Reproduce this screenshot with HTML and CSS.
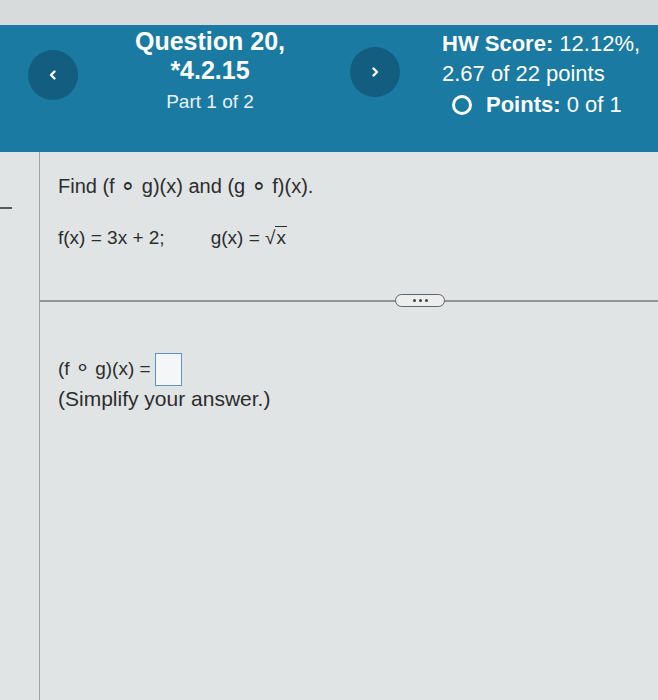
FILE: index.html
```html
<!DOCTYPE html>
<html>
<head>
<meta charset="utf-8">
<link rel="stylesheet" href="styles.css">
</head>
<body>
<div class="topstrip"></div>
<header class="header">
  <button class="nav nav-prev" aria-label="Previous">
    <svg width="14" height="14" viewBox="0 0 14 14"><path d="M8.5 3.5 L5 7 L8.5 10.5" fill="none" stroke="#fff" stroke-width="2.4" stroke-linecap="round" stroke-linejoin="round"/></svg>
  </button>
  <div class="title">
    <div class="title-main">Question 20,</div>
    <div class="title-main">*4.2.15</div>
    <div class="title-part">Part 1 of 2</div>
  </div>
  <button class="nav nav-next" aria-label="Next">
    <svg width="14" height="14" viewBox="0 0 14 14"><path d="M5.5 3.5 L9 7 L5.5 10.5" fill="none" stroke="#fff" stroke-width="2.4" stroke-linecap="round" stroke-linejoin="round"/></svg>
  </button>
  <div class="score">
    <div><b>HW Score:</b> 12.12%,</div>
    <div>2.67 of 22 points</div>
    <div class="pts"><span class="ring"></span><span><b>Points:</b> 0 of 1</span></div>
  </div>
</header>
<main class="main">
  <div class="gutter"><span class="tick"></span></div>
  <div class="content">
    <div class="question">
      <p class="q1">Find (f <span class="comp">∘</span> g)(x) and (g <span class="comp">∘</span> f)(x).</p>
      <p class="q2"><span>f(x) = 3x + 2;</span><span class="gx">g(x) = <span class="sqrt">√<span class="rad">x</span></span></span></p>
    </div>
    <div class="divider"><span class="pill"><i></i><i></i><i></i></span></div>
    <div class="answer">
      <p class="a1"><span>(f <span class="comp">∘</span> g)(x) =</span><span class="box"></span></p>
      <p class="a2">(Simplify your answer.)</p>
    </div>
  </div>
</main>
</body>
</html>
```
FILE: styles.css
```css
html, body {
  margin: 0;
  padding: 0;
}
body {
  width: 658px;
  height: 700px;
  overflow: hidden;
  background: #e1e4e4;
  font-family: "Liberation Sans", Arial, sans-serif;
  color: #2b2d2e;
}
.topstrip {
  height: 25px;
  background: #d8dbdb;
}
.header {
  height: 127px;
  background: #1b7aa2;
  display: flex;
  align-items: flex-start;
  color: #fff;
  box-sizing: border-box;
  padding-left: 28px;
}
.nav {
  width: 50px;
  height: 50px;
  border-radius: 50%;
  border: none;
  background: #125d80;
  display: flex;
  align-items: center;
  justify-content: center;
  padding: 0;
  flex: none;
}
.nav-prev { margin-top: 25px; }
.nav-next { margin-top: 22px; margin-left: 8px; }
.title {
  width: 264px;
  text-align: center;
  padding-top: 2px;
}
.title-main {
  font-size: 25px;
  font-weight: bold;
  line-height: 29px;
}
.title-part {
  font-size: 19px;
  line-height: 22px;
  margin-top: 6px;
  color: #e8f1f5;
}
.score {
  margin-left: 42px;
  font-size: 22px;
  line-height: 30px;
  padding-top: 4px;
}
.score b { font-weight: bold; }
.pts {
  display: flex;
  align-items: center;
  margin-top: 1px;
}
.ring {
  width: 14px;
  height: 14px;
  border: 3px solid #fff;
  border-radius: 50%;
  margin-left: 10px;
  margin-right: 14px;
}
.main {
  display: flex;
  height: 548px;
}
.gutter {
  width: 39px;
  border-right: 1.5px solid #9da2a4;
  position: relative;
  flex: none;
}
.tick {
  position: absolute;
  left: 0;
  top: 55px;
  width: 12px;
  height: 2px;
  background: #555a5c;
}
.content {
  flex: 1;
}
.comp {
  font-size: 1.25em;
  line-height: 0;
}
.question {
  padding: 22px 0 0 18px;
}
.q1 {
  margin: 0;
  font-size: 20px;
  line-height: 24px;
}
.q2 {
  margin: 28px 0 0 0;
  font-size: 19px;
  line-height: 24px;
  display: flex;
}
.gx {
  margin-left: 46px;
}
.sqrt { white-space: nowrap; }
.rad {
  border-top: 1.5px solid #2b2d2e;
  padding: 0 1px;
}
.divider {
  margin-top: 43px;
  height: 14px;
  position: relative;
  display: flex;
  align-items: center;
}
.divider::before {
  content: "";
  position: absolute;
  left: 0;
  right: 0;
  top: 7px;
  height: 1.5px;
  background: #8e9395;
}
.pill {
  position: relative;
  margin-left: 355px;
  width: 48px;
  height: 11px;
  border: 1.5px solid #5f6466;
  border-radius: 7px;
  background: #eceeee;
  display: flex;
  align-items: center;
  justify-content: center;
  gap: 3px;
}
.pill i {
  width: 3px;
  height: 3px;
  background: #3d4244;
  border-radius: 50%;
}
.answer {
  padding: 45px 0 0 18px;
}
.a1 {
  margin: 0;
  font-size: 19px;
  line-height: 34px;
  display: flex;
  align-items: center;
}
.box {
  display: inline-block;
  width: 25px;
  height: 31px;
  border: 1.5px solid #5d92c4;
  background: #f4f6f7;
  margin-left: 4px;
}
.a2 {
  margin: 0;
  font-size: 21px;
  line-height: 26px;
}
```
